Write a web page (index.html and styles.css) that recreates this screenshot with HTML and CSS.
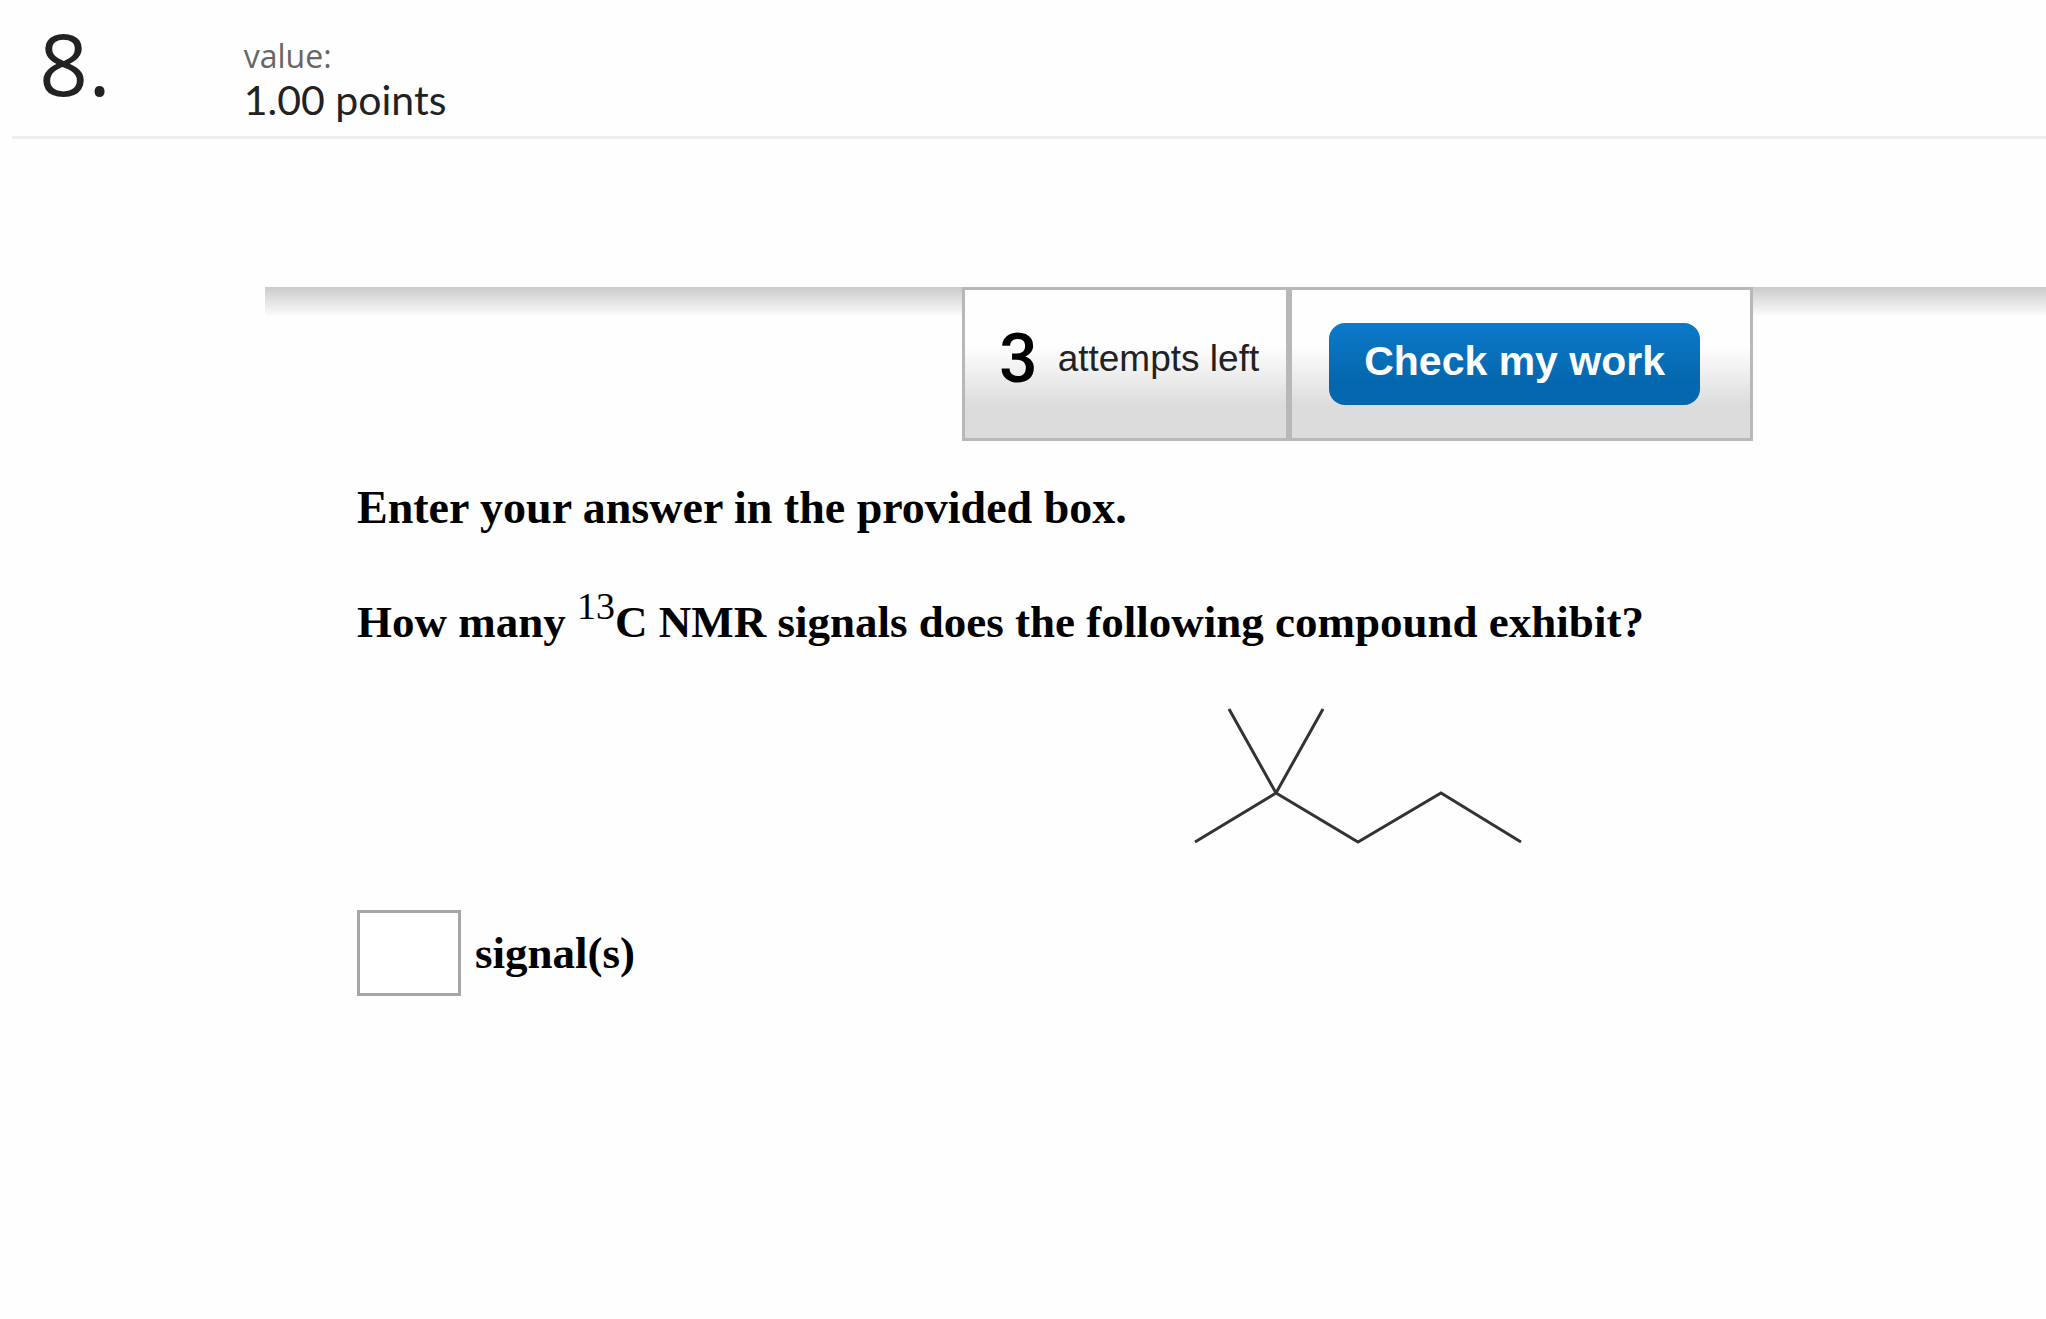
FILE: index.html
```html
<!DOCTYPE html>
<html lang="en">
<head>
    <meta charset="UTF-8">
    <meta name="viewport" content="width=device-width, initial-scale=1.0">
    <title>Question 8</title>
    <link rel="stylesheet" href="styles.css">
</head>
<body>
    <header class="question-header">
        <h1 class="number">8.</h1>
        <div class="value">
            <div class="value-label">value:</div>
            <div class="value-points">1.00 points</div>
        </div>
    </header>

    <main class="question">
        <div class="toolbar">
            <div class="attempts">
                <span class="attempts-count">3</span>
                <span class="attempts-label">attempts left</span>
            </div>
            <div class="check">
                <button type="button" class="check-button">Check my work</button>
            </div>
        </div>

        <form class="content">
            <p class="instruction">Enter your answer in the provided box.</p>
            <p class="prompt">How many <sup>13</sup>C NMR signals does the following compound exhibit?</p>

            <div class="figure">
                <svg class="compound" width="332" height="142" viewBox="0 0 332 142" role="img" aria-label="2,2-dimethylpentane">
                    <path d="M37 4 L84 88 M131 4 L84 88 M3 137 L84 88 L166 137 L249 88 L329 137"/>
                </svg>
            </div>

            <div class="answer">
                <input type="text" id="signals" name="signals">
                <label for="signals">signal(s)</label>
            </div>
        </form>
    </main>
</body>
</html>
```

FILE: styles.css
```css
* {
    box-sizing: border-box;
}
body {
    margin: 0;
    background-color: #fefefe;
    color: #000;
}
.question-header {
    display: flex;
    gap: 133px;
    margin-left: 12px;
    padding: 18px 0 12px 27px;
    border-bottom: 3px solid #eee;
}
.number {
    margin: 0;
    font: 400 86px/90px "Open Sans", sans-serif;
    color: #222;
}
.value {
    padding-top: 18px;
}
.value-label {
    font: 32px/40px "Open Sans", sans-serif;
    color: #666;
}
.value-points {
    font: 41px/48px Lato, sans-serif;
    color: #222;
}
.question {
    margin: 148px 0 0 265px;
}
.toolbar {
    display: flex;
    justify-content: center;
    padding-left: 404px;
    background: linear-gradient(#cbcbcb, #fefefe) no-repeat 0 0 / 100% 30px;
}
.attempts,
.check {
    display: flex;
    align-items: center;
    height: 154px;
    border: 3px solid #b8b8b8;
    background: linear-gradient(#fefefe 38%, #dcdcdc 78%);
}
.attempts {
    gap: 20px;
    padding: 0 27px 10px 34px;
    border-right: none;
}
.attempts-count {
    font: 500 68px/80px Roboto, sans-serif;
}
.attempts-label {
    font: 37px/40px "Liberation Sans", Arial, sans-serif;
    color: #222;
}
.check {
    padding: 0 50px 0 37px;
    border-left-width: 6px;
}
.check-button {
    height: 82px;
    padding: 0 35px 6px;
    border: none;
    border-radius: 16px;
    background: linear-gradient(#0c79ca, #0568ae 70%);
    color: #fff;
    font: bold 41px/48px "Liberation Sans", Arial, sans-serif;
    cursor: pointer;
}
.content {
    padding-left: 92px;
    font: bold 45px/54px "Liberation Serif", "Times New Roman", serif;
}
.instruction {
    margin: 40px 0 60px;
    font-size: 46px;
}
.prompt {
    margin: 0 0 56px;
}
.prompt sup {
    font-size: 38px;
    font-weight: normal;
    line-height: 0;
    vertical-align: 18px;
}
.figure {
    display: flex;
    justify-content: center;
    padding-left: 312px;
}
.compound {
    fill: none;
    stroke: #333;
    stroke-width: 3;
}
.answer {
    display: flex;
    align-items: center;
    gap: 14px;
    margin-top: 63px;
}
.answer input {
    width: 104px;
    height: 86px;
    padding: 0 12px;
    border: 3px solid #a6a6a6;
    background-color: #fff;
    font: inherit;
}
```
